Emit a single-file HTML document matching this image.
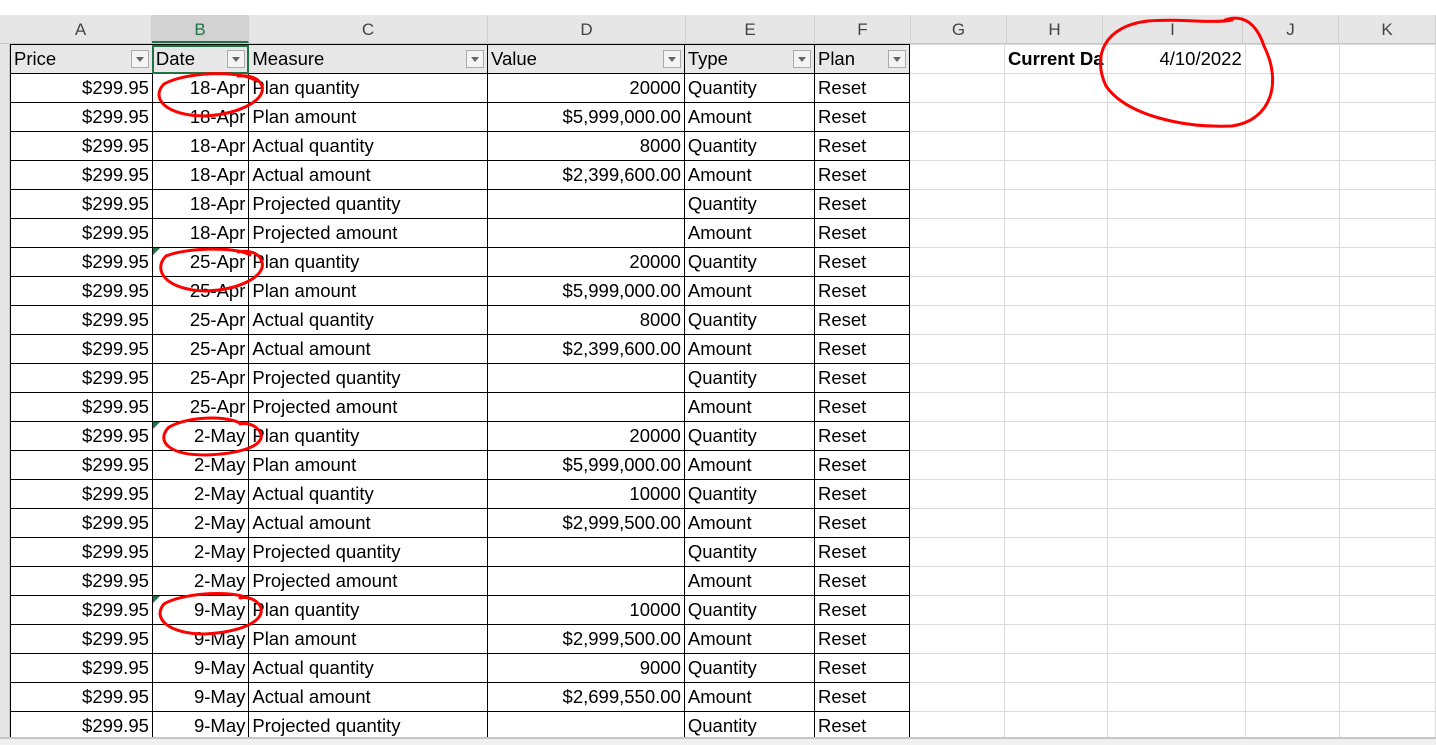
<!DOCTYPE html>
<html><head><meta charset="utf-8"><style>
body{margin:0;width:1436px;height:743px;overflow:hidden;background:#fff;font-family:"Liberation Sans",sans-serif;position:relative}
.top{position:absolute;left:0;top:0;width:1436px;height:15px;background:#fff}
.colhdr{position:absolute;left:0;top:15px;width:1436px;height:28px;background:#e6e6e6;border-bottom:1px solid #c6c6c6}
.ch{position:absolute;top:15px;height:28px;line-height:30px;text-align:center;font-size:17px;color:#444;border-right:1px solid #d0d0d0;box-sizing:border-box}
.ch.sel{background:#d2d2d2;color:#217346;border-bottom:2px solid #217346}
.rowhdr{position:absolute;left:0;top:44px;width:9px;height:693px;background:#e6e6e6;border-right:1px solid #c6c6c6}
table{position:absolute;left:10px;top:44px;border-collapse:collapse;table-layout:fixed;font-size:18.5px;color:#000}
td{height:28px;max-height:28px;padding:0 3px;white-space:nowrap;overflow:hidden;border:1px solid #dadada;line-height:28px}
tr{height:29px}
td.b{border:1px solid #000}
td.r{text-align:right}
tr.h td.b{background:#e8e8e8}
.dd{float:right;width:18px;height:18px;border:1px solid #aaa;background:#f4f4f4;margin-top:5px;box-sizing:border-box;position:relative}
.dd:after{content:"";position:absolute;left:4px;top:6px;border-left:4px solid transparent;border-right:4px solid transparent;border-top:5px solid #666}
.bottom{position:absolute;left:0;top:737px;width:1436px;height:6px;background:#f0f0f0;border-top:2px solid #c6c6c6}
svg{position:absolute;left:0;top:0}
</style></head><body>
<div class="top"></div>
<div class="colhdr"></div>
<div class="ch" style="left:10px;width:142px">A</div>
<div class="ch sel" style="left:152px;width:97px">B</div>
<div class="ch" style="left:249px;width:239px">C</div>
<div class="ch" style="left:488px;width:198px">D</div>
<div class="ch" style="left:686px;width:129px">E</div>
<div class="ch" style="left:815px;width:96px">F</div>
<div class="ch" style="left:911px;width:96px">G</div>
<div class="ch" style="left:1007px;width:96px">H</div>
<div class="ch" style="left:1103px;width:140px">I</div>
<div class="ch" style="left:1243px;width:96px">J</div>
<div class="ch" style="left:1339px;width:97px">K</div>
<div class="rowhdr"></div>
<table>
<colgroup><col style="width:143px"><col style="width:97px"><col style="width:240px"><col style="width:198px"><col style="width:131px"><col style="width:96px"><col style="width:96px"><col style="width:94px"><col style="width:139px"><col style="width:96px"><col style="width:97px"></colgroup>
<tr class="h"><td class="b">Price<span class="dd"></span></td><td class="b" style="outline:2px solid #217346;outline-offset:-2px">Date<span class="dd"></span></td><td class="b">Measure<span class="dd"></span></td><td class="b">Value<span class="dd"></span></td><td class="b">Type<span class="dd"></span></td><td class="b">Plan<span class="dd"></span></td><td></td><td style="font-weight:bold">Current Da</td><td class="r">4/10/2022</td><td></td><td></td></tr>
<tr><td class="b r">$299.95</td><td class="b r">18-Apr</td><td class="b">Plan quantity</td><td class="b r">20000</td><td class="b">Quantity</td><td class="b">Reset</td><td></td><td></td><td></td><td></td><td></td></tr>
<tr><td class="b r">$299.95</td><td class="b r">18-Apr</td><td class="b">Plan amount</td><td class="b r">$5,999,000.00 </td><td class="b">Amount</td><td class="b">Reset</td><td></td><td></td><td></td><td></td><td></td></tr>
<tr><td class="b r">$299.95</td><td class="b r">18-Apr</td><td class="b">Actual quantity</td><td class="b r">8000</td><td class="b">Quantity</td><td class="b">Reset</td><td></td><td></td><td></td><td></td><td></td></tr>
<tr><td class="b r">$299.95</td><td class="b r">18-Apr</td><td class="b">Actual amount</td><td class="b r">$2,399,600.00 </td><td class="b">Amount</td><td class="b">Reset</td><td></td><td></td><td></td><td></td><td></td></tr>
<tr><td class="b r">$299.95</td><td class="b r">18-Apr</td><td class="b">Projected quantity</td><td class="b r"></td><td class="b">Quantity</td><td class="b">Reset</td><td></td><td></td><td></td><td></td><td></td></tr>
<tr><td class="b r">$299.95</td><td class="b r">18-Apr</td><td class="b">Projected amount</td><td class="b r"></td><td class="b">Amount</td><td class="b">Reset</td><td></td><td></td><td></td><td></td><td></td></tr>
<tr><td class="b r">$299.95</td><td class="b r">25-Apr</td><td class="b">Plan quantity</td><td class="b r">20000</td><td class="b">Quantity</td><td class="b">Reset</td><td></td><td></td><td></td><td></td><td></td></tr>
<tr><td class="b r">$299.95</td><td class="b r">25-Apr</td><td class="b">Plan amount</td><td class="b r">$5,999,000.00 </td><td class="b">Amount</td><td class="b">Reset</td><td></td><td></td><td></td><td></td><td></td></tr>
<tr><td class="b r">$299.95</td><td class="b r">25-Apr</td><td class="b">Actual quantity</td><td class="b r">8000</td><td class="b">Quantity</td><td class="b">Reset</td><td></td><td></td><td></td><td></td><td></td></tr>
<tr><td class="b r">$299.95</td><td class="b r">25-Apr</td><td class="b">Actual amount</td><td class="b r">$2,399,600.00 </td><td class="b">Amount</td><td class="b">Reset</td><td></td><td></td><td></td><td></td><td></td></tr>
<tr><td class="b r">$299.95</td><td class="b r">25-Apr</td><td class="b">Projected quantity</td><td class="b r"></td><td class="b">Quantity</td><td class="b">Reset</td><td></td><td></td><td></td><td></td><td></td></tr>
<tr><td class="b r">$299.95</td><td class="b r">25-Apr</td><td class="b">Projected amount</td><td class="b r"></td><td class="b">Amount</td><td class="b">Reset</td><td></td><td></td><td></td><td></td><td></td></tr>
<tr><td class="b r">$299.95</td><td class="b r">2-May</td><td class="b">Plan quantity</td><td class="b r">20000</td><td class="b">Quantity</td><td class="b">Reset</td><td></td><td></td><td></td><td></td><td></td></tr>
<tr><td class="b r">$299.95</td><td class="b r">2-May</td><td class="b">Plan amount</td><td class="b r">$5,999,000.00 </td><td class="b">Amount</td><td class="b">Reset</td><td></td><td></td><td></td><td></td><td></td></tr>
<tr><td class="b r">$299.95</td><td class="b r">2-May</td><td class="b">Actual quantity</td><td class="b r">10000</td><td class="b">Quantity</td><td class="b">Reset</td><td></td><td></td><td></td><td></td><td></td></tr>
<tr><td class="b r">$299.95</td><td class="b r">2-May</td><td class="b">Actual amount</td><td class="b r">$2,999,500.00 </td><td class="b">Amount</td><td class="b">Reset</td><td></td><td></td><td></td><td></td><td></td></tr>
<tr><td class="b r">$299.95</td><td class="b r">2-May</td><td class="b">Projected quantity</td><td class="b r"></td><td class="b">Quantity</td><td class="b">Reset</td><td></td><td></td><td></td><td></td><td></td></tr>
<tr><td class="b r">$299.95</td><td class="b r">2-May</td><td class="b">Projected amount</td><td class="b r"></td><td class="b">Amount</td><td class="b">Reset</td><td></td><td></td><td></td><td></td><td></td></tr>
<tr><td class="b r">$299.95</td><td class="b r">9-May</td><td class="b">Plan quantity</td><td class="b r">10000</td><td class="b">Quantity</td><td class="b">Reset</td><td></td><td></td><td></td><td></td><td></td></tr>
<tr><td class="b r">$299.95</td><td class="b r">9-May</td><td class="b">Plan amount</td><td class="b r">$2,999,500.00 </td><td class="b">Amount</td><td class="b">Reset</td><td></td><td></td><td></td><td></td><td></td></tr>
<tr><td class="b r">$299.95</td><td class="b r">9-May</td><td class="b">Actual quantity</td><td class="b r">9000</td><td class="b">Quantity</td><td class="b">Reset</td><td></td><td></td><td></td><td></td><td></td></tr>
<tr><td class="b r">$299.95</td><td class="b r">9-May</td><td class="b">Actual amount</td><td class="b r">$2,699,550.00 </td><td class="b">Amount</td><td class="b">Reset</td><td></td><td></td><td></td><td></td><td></td></tr>
<tr><td class="b r">$299.95</td><td class="b r">9-May</td><td class="b">Projected quantity</td><td class="b r"></td><td class="b">Quantity</td><td class="b">Reset</td><td></td><td></td><td></td><td></td><td></td></tr>
</table>
<div class="bottom"></div>
<svg width="1436" height="743" fill="none" stroke="#f00" stroke-width="3" stroke-linecap="round">
<polygon points="153,248 160,248 153,255" fill="#217346" stroke="none"/>
<polygon points="153,422 160,422 153,429" fill="#217346" stroke="none"/>
<polygon points="153,596 160,596 153,603" fill="#217346" stroke="none"/>
<path d="M255,80 C238,70 185,72 164,84 C150,98 166,116 205,116 C240,114 266,100 262,86 C259,78 250,75 238,76"/>
<path d="M250,255 C235,246 185,248 166,256 C152,270 166,290 205,291 C240,290 266,276 262,262 C259,252 248,250 238,252"/>
<path d="M240,423 C222,414 182,418 168,428 C156,442 170,455 205,455 C240,454 264,446 261,434 C258,426 248,422 240,424"/>
<path d="M245,597 C225,590 180,594 164,604 C152,618 168,634 205,634 C240,632 264,622 261,608 C258,600 248,596 240,598"/>
<path d="M1225,20 C1242,14 1256,22 1264,46 C1282,82 1272,120 1232,126 C1182,128 1126,115 1106,86 C1092,56 1104,26 1148,21 C1180,18 1210,24 1232,20"/>
</svg>
</body></html>
